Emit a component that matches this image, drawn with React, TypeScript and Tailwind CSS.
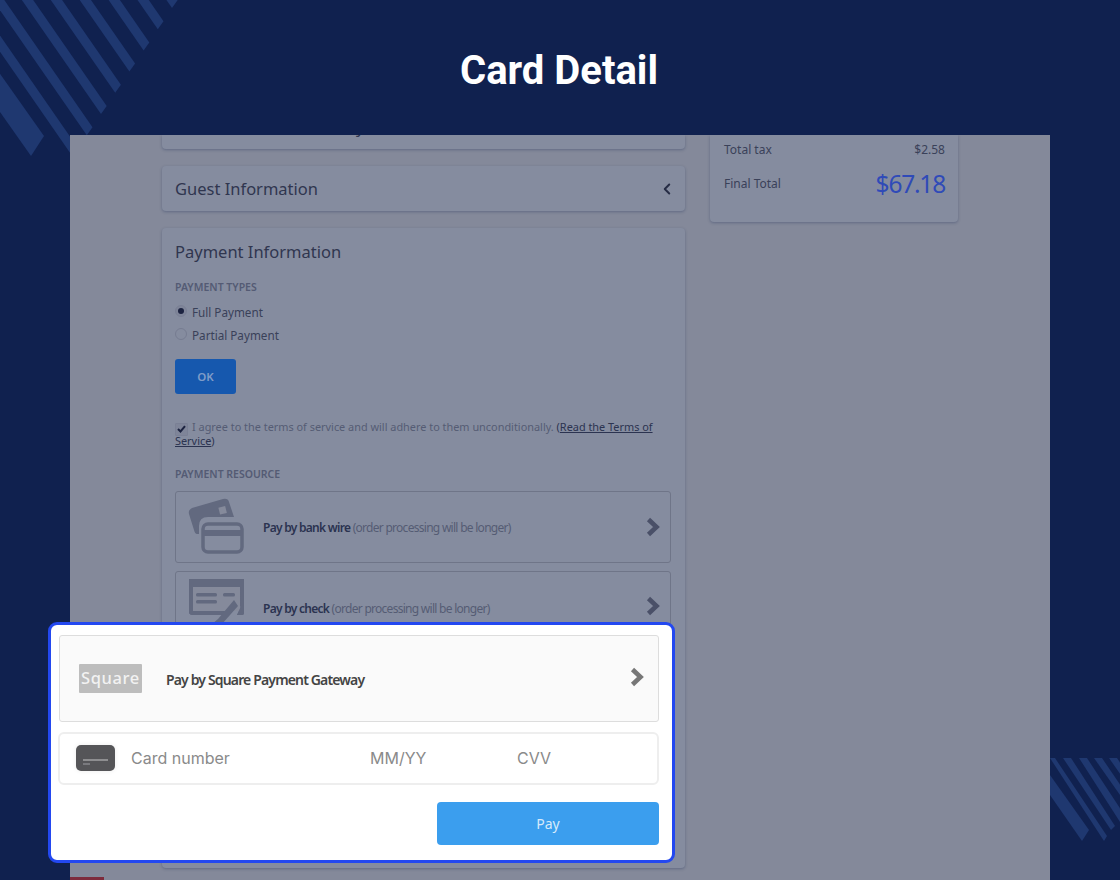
import { ChevronLeft } from 'lucide-react';

function Stripes() {
  // tips of the thin stripes run along the diagonal edge of the corner pattern
  const thin = [0, 1, 2, 3, 4, 5, 6, 7].map((i) => {
    const x = 172 - 14.2 * i;
    const y = 8 + 21.2 * i;
    return `${x - 200},${y - 288} ${x},${y} ${x + 5.7},${y - 8} ${x - 194},${y - 296}`;
  });
  return (
    <svg className="absolute left-0 top-0" width="180" height="160" viewBox="0 0 180 160">
      {thin.map((p) => (
        <polygon key={p} points={p} fill="#1f3870" />
      ))}
      <polygon points="-50,41 31,156 44,136 -50,3" fill="#1f3870" />
    </svg>
  );
}

function CornerStripes() {
  return (
    <svg className="absolute left-[1050px] top-[758px]" width="70" height="90" viewBox="1050 758 70 90">
      <polygon points="1050,775 1050,795 1082,841 1089,830" fill="#1f3870" />
      <polygon points="1050,758 1055,758 1107,836 1104,841" fill="#1f3870" />
      <polygon points="1063,758 1071,758 1115,826 1111,830" fill="#1f3870" />
      <polygon points="1079,758 1087,758 1125,816 1120,822" fill="#1f3870" />
      <polygon points="1094,758 1102,758 1125,792 1125,802" fill="#1f3870" />
      <polygon points="1109,758 1117,758 1125,770 1125,781" fill="#1f3870" />
    </svg>
  );
}

function Chevron({ color, className }: { color: string; className: string }) {
  return (
    <svg className={className} viewBox="0 0 16 20" fill="none">
      <path d="M3.5 2.5 11.5 10 3.5 17.5" stroke={color} strokeWidth="4.6" />
    </svg>
  );
}

function BankIcon() {
  return (
    <svg width="60" height="60" viewBox="0 0 60 60" className="shrink-0">
      <path d="M1 17 Q0 13 4 11 L35 2 Q40 1 41 5 L46 20 H20 Q11 20 11 29 V37 H9 Q7 37 6 33 Z" fill="#62697f" />
      <rect x="31" y="10" width="7" height="7" fill="#858a9b" transform="rotate(-14 34 13)" />
      <rect x="15" y="27" width="39" height="28" rx="5" fill="none" stroke="#62697f" strokeWidth="3.5" />
      <rect x="14" y="33" width="41" height="6" fill="#62697f" />
    </svg>
  );
}

function CheckIcon() {
  return (
    <svg width="60" height="48" viewBox="0 0 60 48" className="shrink-0">
      <path d="M1 3 H56 V37 Q56 39 54 39 H49 L52 33 Q53 31 52 30 L47 28 L38 39 H5 Q1 39 1 36 Z" fill="#62697f" />
      <rect x="5" y="11" width="47" height="24" fill="#858a9b" />
      <path d="M38 39 H5 Q1 39 1 36 V11 H5 V36 H38 Z" fill="#62697f" />
      <path d="M52 11 H56 V37 Q56 39 54 39 H49 L53 30 Z" fill="#62697f" />
      <rect x="8" y="17" width="21" height="3.5" rx="1.5" fill="#62697f" />
      <rect x="35" y="17" width="12" height="3.5" rx="1.5" fill="#62697f" />
      <rect x="8" y="24" width="21" height="3.5" rx="1.5" fill="#62697f" />
      <path d="M46 24 L30 43 L24 48 H34 L50 30 Z" fill="#62697f" />
    </svg>
  );
}

export default function App() {
  return (
    <div className="relative h-[880px] overflow-hidden bg-[#10214f] font-['Noto_Sans',sans-serif]">
      <Stripes />
      <CornerStripes />

      <header className="relative flex h-[135px] items-center justify-center pr-[2px] pt-[6px]">
        <h1 className="font-['Roboto',sans-serif] text-[40px] font-bold leading-none text-white">Card Detail</h1>
      </header>

      {/* Checkout page, dimmed behind the modal */}
      <main className="relative mx-[70px] flex h-[745px] items-start gap-[25px] overflow-hidden bg-[#84899a] pl-[92px]">
        <div className="absolute bottom-0 left-0 h-[3px] w-[34px] bg-[#7d2b3c]" />

        <div className="flex w-[523px] shrink-0 flex-col gap-[17px]">
          <div className="flex h-[14px] items-end overflow-hidden rounded-b bg-[#858c9f] pl-[13px] shadow-[0_1px_3px_rgba(16,33,79,0.3)]">
            <span className="mb-[10px] text-[16.5px] leading-[24px] text-[#30364f]">Product Order Summary</span>
          </div>

          <div className="flex h-[45px] items-center justify-between rounded bg-[#858c9f] pl-[13px] pr-[14px] pt-[1px] shadow-[0_1px_3px_rgba(16,33,79,0.3)]">
            <span className="text-[16.5px] text-[#30364f]">Guest Information</span>
            <ChevronLeft className="mr-[-5px] h-[18px] w-[18px] text-[#262c45]" strokeWidth={2.6} />
          </div>

          <div className="flex h-[640px] flex-col rounded bg-[#858c9f] pl-[13px] pr-[14px] pt-[12px] shadow-[0_1px_3px_rgba(16,33,79,0.3)]">
            <h2 className="text-[16.5px] leading-[24px] text-[#30364f]">Payment Information</h2>
            <p className="mt-[16px] text-[10.5px] font-semibold leading-[14px] text-[#545b74]">PAYMENT TYPES</p>

            <div className="mt-[9px] flex items-center gap-[5px] text-[11.7px] leading-[18px] text-[#3a4159]">
              <span className="-mt-[2px] flex h-[12px] w-[12px] items-center justify-center rounded-full border border-[#7a8095] bg-[#7f8599]">
                <span className="h-[6px] w-[6px] rounded-full bg-[#1c2340]" />
              </span>
              Full Payment
            </div>
            <div className="mt-[5px] flex items-center gap-[5px] text-[11.7px] leading-[18px] text-[#3a4159]">
              <span className="-mt-[2px] h-[12px] w-[12px] rounded-full border border-[#767c91]" />
              Partial Payment
            </div>

            <button className="mt-[15px] h-[35px] w-[61px] rounded-[3px] bg-[#1658ae] text-[11.5px] font-semibold text-[#7f9cc8]">OK</button>

            <div className="mt-[26px] text-[10.9px] leading-[14px] text-[#555c74]">
              <span className="mr-[4px] inline-flex h-[13px] w-[13px] translate-y-[2px] items-center justify-center rounded-[1px] border border-[#7a8095] bg-[#7f8599]">
                <svg width="9" height="8" viewBox="0 0 9 8" fill="none">
                  <path d="M1 4 3.5 6.5 8 1.2" stroke="#1c2340" strokeWidth="2" />
                </svg>
              </span>
              I agree to the terms of service and will adhere to them unconditionally.{' '}
              <span className="text-[#2b3350]">
                (<span className="underline">Read the Terms of Service</span>)
              </span>
            </div>

            <p className="mt-[19px] text-[10.5px] font-semibold leading-[14px] text-[#545b74]">PAYMENT RESOURCE</p>

            <div className="mt-[10px] flex h-[72px] items-center rounded-[3px] border border-[#6f7588] pl-[12px] pr-[9px]">
              <BankIcon />
              <span className="ml-[15px] mt-[2px] text-[12px] tracking-[-0.72px] text-[#555c74]">
                <span className="font-semibold text-[#2b3350]">Pay by bank wire</span> (order processing will be longer)
              </span>
              <Chevron color="#4a5068" className="ml-auto h-[20px] w-[16px]" />
            </div>

            <div className="mt-[8px] flex h-[72px] items-start rounded-[3px] border border-[#6f7588] pl-[12px] pr-[9px] pt-[4px]">
              <CheckIcon />
              <span className="ml-[15px] mt-[24px] text-[12px] tracking-[-0.72px] text-[#555c74]">
                <span className="font-semibold text-[#2b3350]">Pay by check</span> (order processing will be longer)
              </span>
              <Chevron color="#4a5068" className="ml-auto mt-[20px] h-[20px] w-[16px]" />
            </div>
          </div>
        </div>

        <div className="flex h-[87px] w-[248px] shrink-0 flex-col rounded-b bg-[#858c9f] pl-[14px] pr-[13px] pt-[6px] shadow-[0_1px_3px_rgba(16,33,79,0.3)]">
          <div className="flex items-center justify-between text-[12px] leading-[18px] text-[#3a4159]">
            <span>Total tax</span>
            <span>$2.58</span>
          </div>
          <div className="mt-[8px] flex items-center justify-between">
            <span className="text-[12px] text-[#3a4159]">Final Total</span>
            <span className="text-[24.5px] leading-[34px] tracking-[-1.2px] text-[#2f4ab8]">$67.18</span>
          </div>
        </div>
      </main>

      {/* Square payment modal */}
      <section className="absolute left-[48px] top-[622px] flex h-[241px] w-[627px] flex-col rounded-[9px] border-[3px] border-[#2348f0] bg-white pl-[8px] pr-[13px] pt-[10px]">
        <div className="flex h-[87px] shrink-0 items-center rounded-[3px] border border-[#dddddd] bg-[#fafafa] pl-[19px] pr-[13px]">
          <span className="flex h-[29px] w-[63px] items-center justify-center rounded-[1px] bg-[#bdbdbd] text-[16.5px] font-medium leading-none tracking-[0.6px] text-[#f2f2f2]">
            Square
          </span>
          <span className="ml-[24px] mt-[1px] text-[14px] font-semibold tracking-[-0.85px] text-[#444444]">Pay by Square Payment Gateway</span>
          <Chevron color="#777777" className="ml-auto mb-[3px] h-[20px] w-[16px]" />
        </div>

        <div className="-ml-px mt-[10px] flex h-[53px] shrink-0 items-center rounded-[6px] border-2 border-[#eeeeee] pb-[2px] font-['Inter',sans-serif] text-[16px] text-[#8a8a8a]">
          <span className="ml-[16px] flex h-[26px] w-[39px] shrink-0 flex-col justify-end rounded-[5px] bg-[#555558] pb-[6px] pl-[7px] shadow-[0_0_5px_rgba(0,0,0,0.08)]">
            <span className="h-[2px] w-[25px] bg-[#8e8e90]" />
            <span className="mt-[2px] h-[2px] w-[7px] bg-[#7a7a7e]" />
          </span>
          <span className="ml-[16px] w-[239px] shrink-0">Card number</span>
          <span className="w-[147px] shrink-0">MM/YY</span>
          <span>CVV</span>
        </div>

        <div className="mt-[17px] flex justify-end">
          <button className="h-[43px] w-[222px] rounded-[4px] bg-[#3b9eee] text-[14px] text-[#d6eafb]">Pay</button>
        </div>
      </section>
    </div>
  );
}
